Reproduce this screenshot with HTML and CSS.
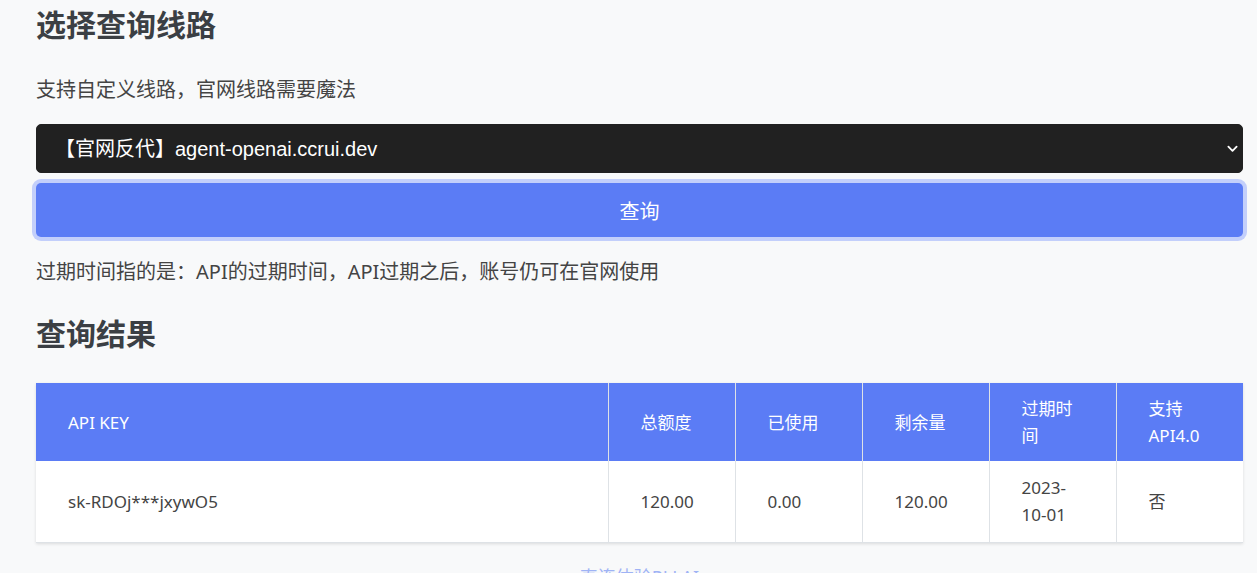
FILE: index.html
```html
<!DOCTYPE html>
<html lang="zh-CN">
<head>
<meta charset="utf-8">
<title>查询</title>
<link rel="stylesheet" href="styles.css">
</head>
<body>
<main class="container">
  <h2 class="title title-first">选择查询线路</h2>
  <p class="note note-first">支持自定义线路，官网线路需要魔法</p>
  <div class="select-wrap">
    <select class="route-select">
      <option>【官网反代】agent-openai.ccrui.dev</option>
    </select>
    <svg class="chevron" viewBox="0 0 12 8" width="11" height="8"><path d="M1.5 1.5 L6 6 L10.5 1.5" fill="none" stroke="#fff" stroke-width="2" stroke-linecap="round" stroke-linejoin="round"/></svg>
  </div>
  <button class="query-btn" type="button">查询</button>
  <p class="note note-second">过期时间指的是：API的过期时间，API过期之后，账号仍可在官网使用</p>
  <h2 class="title title-second">查询结果</h2>
  <table class="result">
    <thead>
      <tr>
        <th class="col-key">API KEY</th>
        <th>总额度</th>
        <th>已使用</th>
        <th>剩余量</th>
        <th>过期时间</th>
        <th>支持API4.0</th>
      </tr>
    </thead>
    <tbody>
      <tr>
        <td>sk-RDOj***jxywO5</td>
        <td>120.00</td>
        <td>0.00</td>
        <td>120.00</td>
        <td>2023-10-01</td>
        <td>否</td>
      </tr>
    </tbody>
  </table>
  <a class="footer-link" href="#">直连体验PLLAI</a>
</main>
</body>
</html>
```

FILE: styles.css
```css
html, body {
  margin: 0;
  padding: 0;
  background: #f8f9fa;
}

body {
  font-family: "Noto Sans", "Noto Sans CJK SC", sans-serif;
  color: #444;
  overflow: hidden;
}

.container {
  padding: 7px 14px 0 36px;
}

.title {
  margin: 0;
  font-size: 30px;
  line-height: 36px;
  font-weight: 700;
  color: #3b3f44;
}

.title-second {
  margin-top: 29px;
}

.note {
  margin: 0;
  font-size: 20px;
  line-height: 30px;
  color: #444;
}

.note-first {
  margin-top: 32px;
}

.note-second {
  margin-top: 20px;
}

.select-wrap {
  position: relative;
  margin-top: 19px;
}

.route-select {
  display: block;
  width: 100%;
  height: 49px;
  box-sizing: border-box;
  appearance: none;
  -webkit-appearance: none;
  background: #212121;
  color: #fff;
  border: 1px solid #212121;
  border-radius: 5px;
  padding: 0 40px 0 18px;
  font-family: "Liberation Sans", "Noto Sans CJK SC", sans-serif;
  font-size: 20px;
}

.chevron {
  position: absolute;
  right: 5px;
  top: 21px;
}

.query-btn {
  display: block;
  width: 100%;
  height: 54px;
  margin-top: 10px;
  box-sizing: border-box;
  background: #5b7cf5;
  color: #fff;
  border: none;
  border-radius: 5px;
  box-shadow: 0 0 0 4px #c3cffb;
  font-family: "Noto Sans", "Noto Sans CJK SC", sans-serif;
  font-size: 20px;
}

.result {
  margin-top: 31px;
  width: 100%;
  border-collapse: collapse;
  background: #fff;
  box-shadow: 0 1px 3px rgba(0, 0, 0, 0.12);
  font-size: 17px;
  line-height: 27px;
  table-layout: fixed;
}

.result th,
.result td {
  text-align: left;
  padding: 12px 30px 12px 32px;
  border-left: 1px solid #dee2e6;
  width: 127px;
  box-sizing: border-box;
  vertical-align: middle;
}

.result th:first-child,
.result td:first-child {
  border-left: none;
  width: auto;
}

.result th {
  background: #5b7cf5;
  color: #fff;
  font-weight: 400;
  height: 78px;
}

.result td {
  color: #444;
  height: 81px;
  border-bottom: 1px solid #dee2e6;
}

.footer-link {
  display: block;
  margin-top: 20px;
  text-align: center;
  font-size: 18px;
  color: #9fb3f5;
  text-decoration: none;
}
```
